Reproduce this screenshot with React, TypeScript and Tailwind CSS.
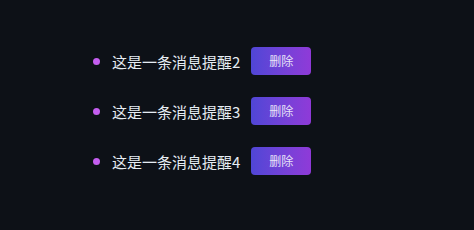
const items = ['这是一条消息提醒2', '这是一条消息提醒3', '这是一条消息提醒4'];

export default function App() {
  return (
    <div
      className="min-h-screen w-full bg-[#0d1117] pl-[93px] pt-[47px]"
      style={{ fontFamily: '"Noto Sans CJK SC", "Liberation Sans", sans-serif' }}
    >
      <ul className="flex flex-col gap-[22px]">
        {items.map((t) => (
          <li key={t} className="flex h-[28px] items-center">
            <span className="h-[7px] w-[7px] rounded-full bg-[#c45ef0]" />
            <span className="ml-[12px] text-[15px] leading-none text-[#e6edf3]">{t}</span>
            <button className="ml-[11px] h-[28px] w-[60px] rounded-[4px] bg-gradient-to-r from-[#4f46d6] to-[#8f3ad8] text-[12px] text-[#e8e4f7]">
              删除
            </button>
          </li>
        ))}
      </ul>
    </div>
  );
}
